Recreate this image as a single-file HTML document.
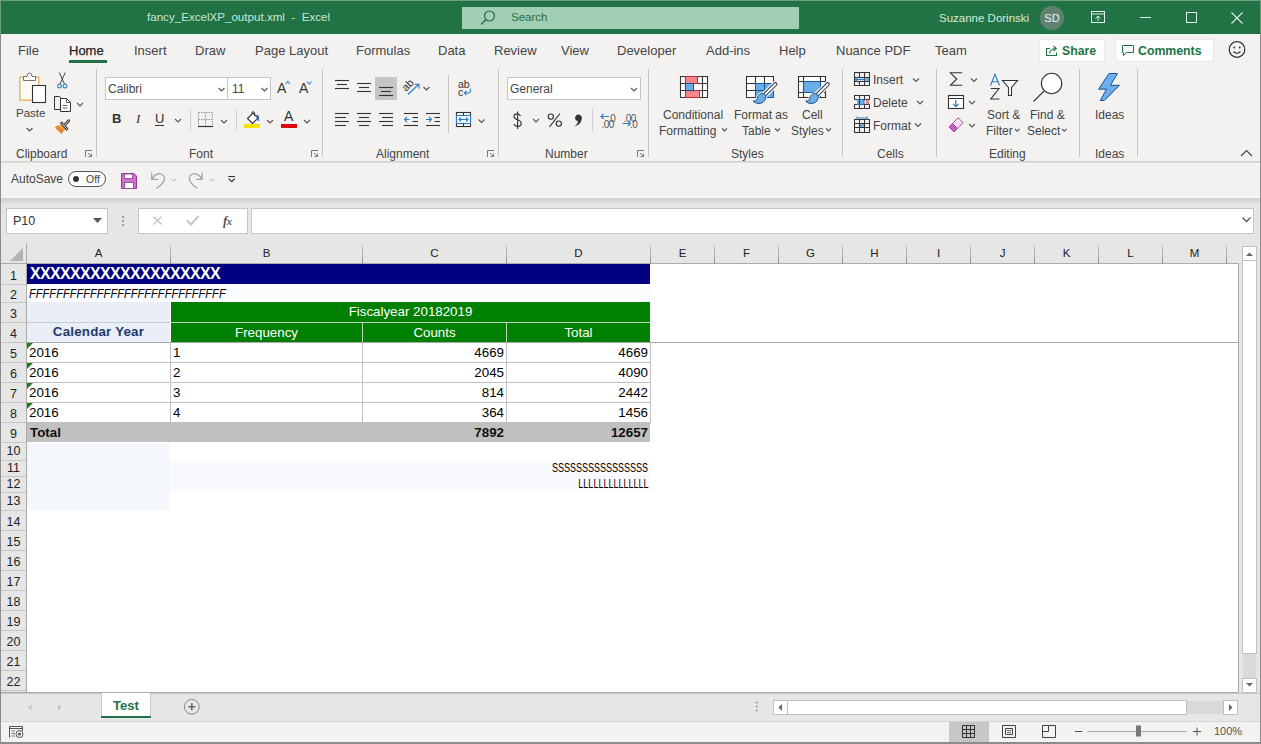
<!DOCTYPE html>
<html><head><meta charset="utf-8">
<style>
*{margin:0;padding:0;box-sizing:border-box}
html,body{width:1261px;height:744px;overflow:hidden;background:#f3f2f1;font-family:"Liberation Sans",sans-serif;color:#323130}
.a{position:absolute;white-space:nowrap}
svg{position:absolute;overflow:visible}
#title{left:0;top:0;width:1261px;height:34px;background:#217346;border-top:1px solid #6a9f80}
.t13{font-size:13px;color:#444}
.rl{font-size:12px;color:#444}
.sep{position:absolute;width:1px;background:#c8c8c8}
.chev{position:absolute}
.hdr{position:absolute;background:#e6e6e6}
.cell{position:absolute;font-size:13.33px;color:#000;line-height:20px;white-space:nowrap;overflow:hidden}
</style></head><body>
<!-- TITLE BAR -->
<div id="title" class="a"></div>
<div class="a" style="left:147px;top:10px;font-size:11.6px;color:#c9e7d5">fancy_ExcelXP_output.xml&nbsp; - &nbsp;Excel</div>
<div class="a" style="left:462px;top:7px;width:337px;height:22px;background:#a0cfb3"></div>
<svg style="left:480px;top:10px" width="16" height="16" viewBox="0 0 16 16"><circle cx="9.5" cy="6" r="5" fill="none" stroke="#2d6b48" stroke-width="1.2"/><line x1="6" y1="9.5" x2="1" y2="14.5" stroke="#2d6b48" stroke-width="1.3"/></svg>
<div class="a" style="left:511px;top:11px;font-size:11.5px;color:#2d6b48">Search</div>
<div class="a" style="left:939px;top:12px;font-size:11.5px;color:#d6ebdd">Suzanne Dorinski</div>
<div class="a" style="left:1040px;top:6px;width:24px;height:24px;border-radius:12px;background:#5f8270"></div>
<div class="a" style="left:1043px;top:12px;width:18px;text-align:center;font-size:11px;color:#f4f4f4">SD</div>
<svg style="left:1091px;top:11px" width="15" height="13" viewBox="0 0 15 13"><rect x="0.5" y="0.5" width="13" height="11" fill="none" stroke="#e0efe6" stroke-width="1"/><line x1="0.5" y1="3" x2="13.5" y2="3" stroke="#e0efe6"/><path d="M7 10V5M4.5 7.5L7 5l2.5 2.5" fill="none" stroke="#e0efe6"/></svg>
<div class="a" style="left:1140px;top:17px;width:11px;height:1px;background:#e0efe6"></div>
<div class="a" style="left:1186px;top:12px;width:11px;height:11px;border:1px solid #e0efe6"></div>
<svg style="left:1231px;top:12px" width="12" height="12" viewBox="0 0 12 12"><path d="M0.5 0.5L11.5 11.5M11.5 0.5L0.5 11.5" stroke="#e0efe6" stroke-width="1.1"/></svg>

<!-- TABS -->
<div class="a t13" style="left:18px;top:43px">File</div>
<div class="a t13" style="left:69px;top:43px;color:#252423;font-weight:normal;-webkit-text-stroke:0.25px #252423">Home</div>
<div class="a" style="left:69px;top:60px;width:38px;height:3px;background:#217346"></div>
<div class="a t13" style="left:134px;top:43px">Insert</div>
<div class="a t13" style="left:195px;top:43px">Draw</div>
<div class="a t13" style="left:255px;top:43px">Page Layout</div>
<div class="a t13" style="left:356px;top:43px">Formulas</div>
<div class="a t13" style="left:438px;top:43px">Data</div>
<div class="a t13" style="left:494px;top:43px">Review</div>
<div class="a t13" style="left:561px;top:43px">View</div>
<div class="a t13" style="left:617px;top:43px">Developer</div>
<div class="a t13" style="left:706px;top:43px">Add-ins</div>
<div class="a t13" style="left:779px;top:43px">Help</div>
<div class="a t13" style="left:836px;top:43px">Nuance PDF</div>
<div class="a t13" style="left:935px;top:43px">Team</div>

<!-- share/comments -->
<div class="a" style="left:1039px;top:39px;width:66px;height:23px;background:#fdfdfd;border:1px solid #e9e8e7;border-radius:2px"></div>
<div class="a" style="left:1062px;top:44px;font-size:12.3px;font-weight:bold;color:#217346">Share</div>
<div class="a" style="left:1115px;top:39px;width:99px;height:23px;background:#fdfdfd;border:1px solid #e9e8e7;border-radius:2px"></div>
<div class="a" style="left:1138px;top:44px;font-size:12.3px;font-weight:bold;color:#217346">Comments</div>


<!-- RIBBON -->
<div class="a" style="left:0;top:161px;width:1261px;height:1px;background:#d2d0ce"></div>
<div class="a" style="left:0;top:162px;width:1261px;height:1px;background:#e1dfdd"></div>
<!-- labels -->
<div class="a rl" style="left:16px;top:147px">Clipboard</div>
<div class="a rl" style="left:189px;top:147px">Font</div>
<div class="a rl" style="left:376px;top:147px">Alignment</div>
<div class="a rl" style="left:545px;top:147px">Number</div>
<div class="a rl" style="left:731px;top:147px">Styles</div>
<div class="a rl" style="left:877px;top:147px">Cells</div>
<div class="a rl" style="left:989px;top:147px">Editing</div>
<div class="a rl" style="left:1095px;top:147px">Ideas</div>
<div class="a rl" style="left:16px;top:107px;font-size:11.5px">Paste</div>
<!-- font boxes -->
<div class="a" style="left:105px;top:77px;width:123px;height:23px;background:#fff;border:1px solid #c8c6c4"></div>
<div class="a" style="left:227px;top:77px;width:44px;height:23px;background:#fff;border:1px solid #c8c6c4"></div>
<div class="a rl" style="left:108px;top:82px">Calibri</div>
<div class="a rl" style="left:232px;top:82px">11</div>
<div class="a" style="left:507px;top:77px;width:134px;height:23px;background:#fff;border:1px solid #c8c6c4"></div>
<div class="a rl" style="left:510px;top:82px">General</div>
<!-- bottom align selected bg -->
<div class="a" style="left:375px;top:77px;width:22px;height:23px;background:#c8c6c4"></div>
<!-- styles labels -->
<div class="a rl" style="left:663px;top:108px">Conditional</div>
<div class="a rl" style="left:659px;top:124px">Formatting</div>
<div class="a rl" style="left:734px;top:108px">Format as</div>
<div class="a rl" style="left:742px;top:124px">Table</div>
<div class="a rl" style="left:802px;top:108px">Cell</div>
<div class="a rl" style="left:791px;top:124px">Styles</div>
<div class="a rl" style="left:873px;top:73px">Insert</div>
<div class="a rl" style="left:873px;top:96px">Delete</div>
<div class="a rl" style="left:873px;top:119px">Format</div>
<div class="a rl" style="left:987px;top:108px">Sort &amp;</div>
<div class="a rl" style="left:986px;top:124px">Filter</div>
<div class="a rl" style="left:1030px;top:108px">Find &amp;</div>
<div class="a rl" style="left:1027px;top:124px">Select</div>
<div class="a rl" style="left:1095px;top:108px">Ideas</div>
<!-- text-ish icons -->
<div class="a" style="left:112px;top:111px;font-size:13px;font-weight:bold;color:#333">B</div>
<div class="a" style="left:136px;top:111px;font-size:13px;font-style:italic;font-family:'Liberation Serif';color:#333">I</div>
<div class="a" style="left:155px;top:111px;font-size:13px;color:#333">U</div>
<div class="a" style="left:277px;top:80px;font-size:14px;color:#333">A</div>
<div class="a" style="left:299px;top:80px;font-size:14px;color:#333">A</div>
<div class="a" style="left:284px;top:108px;font-size:14px;color:#333">A</div>

<svg style="left:0;top:0" width="1261" height="744" viewBox="0 0 1261 744">
<line x1="96.5" y1="69" x2="96.5" y2="157" stroke="#c8c6c4"/>
<line x1="322.5" y1="69" x2="322.5" y2="157" stroke="#c8c6c4"/>
<line x1="498.5" y1="69" x2="498.5" y2="157" stroke="#c8c6c4"/>
<line x1="648.5" y1="69" x2="648.5" y2="157" stroke="#c8c6c4"/>
<line x1="842.5" y1="69" x2="842.5" y2="157" stroke="#c8c6c4"/>
<line x1="936.5" y1="69" x2="936.5" y2="157" stroke="#c8c6c4"/>
<line x1="1079.5" y1="69" x2="1079.5" y2="157" stroke="#c8c6c4"/>
<line x1="1137.5" y1="69" x2="1137.5" y2="157" stroke="#c8c6c4"/>
<line x1="448.5" y1="75" x2="448.5" y2="133" stroke="#c8c6c4"/>
<line x1="190.5" y1="109" x2="190.5" y2="131" stroke="#d2d0ce"/>
<line x1="236.5" y1="109" x2="236.5" y2="131" stroke="#d2d0ce"/>
<line x1="592.5" y1="109" x2="592.5" y2="131" stroke="#d2d0ce"/>
<path d="M85.5 157V150.5H92" fill="none" stroke="#777"/><path d="M88 153L91.5 156.5M91.5 153.5V156.5H88.5" fill="none" stroke="#777"/>
<path d="M311.5 157V150.5H318" fill="none" stroke="#777"/><path d="M314 153L317.5 156.5M317.5 153.5V156.5H314.5" fill="none" stroke="#777"/>
<path d="M487.5 157V150.5H494" fill="none" stroke="#777"/><path d="M490 153L493.5 156.5M493.5 153.5V156.5H490.5" fill="none" stroke="#777"/>
<path d="M637.5 157V150.5H644" fill="none" stroke="#777"/><path d="M640 153L643.5 156.5M643.5 153.5V156.5H640.5" fill="none" stroke="#777"/>
<path d="M1241 156L1246.5 150.5L1252 156" fill="none" stroke="#444" stroke-width="1.2"/>
<rect x="19.8" y="77.2" width="19" height="23" fill="#fefaf4" stroke="#eab868" stroke-width="1.5"/>
<path d="M23.5 80.5V76.5H27Q27.2 73 29.5 73Q31.8 73 32 76.5H35.5V80.5Z" fill="#fff" stroke="#727272"/>
<rect x="32.5" y="85.5" width="13" height="17" fill="#fff" stroke="#333" stroke-width="1.1"/>
<path d="M26.5 128L29.5 131L32.5 128" fill="none" stroke="#555" stroke-width="1.1"/>
<path d="M59.3 72.5L64.5 84M65.3 72.5L60 84" stroke="#444" stroke-width="1" fill="none"/>
<circle cx="59.5" cy="86" r="1.9" fill="none" stroke="#3a8ad0" stroke-width="1.2"/><circle cx="65" cy="86" r="1.9" fill="none" stroke="#3a8ad0" stroke-width="1.2"/>
<path d="M60.5 109.5H54.5V96.5H59.5L61 98" fill="none" stroke="#333"/>
<path d="M60.5 98.5H66.5L70.5 102.5V111.5H60.5Z" fill="#fff" stroke="#333"/>
<path d="M66.5 98.5V102.5H70.5" fill="none" stroke="#333" stroke-width="0.8"/>
<path d="M62.8 105.5H67.5M62.8 108H67.5" stroke="#555" stroke-width="0.9"/>
<path d="M77 103L80.0 106L83 103" fill="none" stroke="#555" stroke-width="1.1"/>
<path d="M61.2 124.3L65.8 128.9L61.3 133.8L54.8 127.2Z" fill="#f0a04a"/>
<path d="M58 125.5L63.5 131L61.3 133.8L55 127.5Z" fill="#e8862a"/>
<path d="M64.6 124.9L68.7 120.7M61.6 123.1L66.9 129" stroke="#333" stroke-width="2.8" stroke-linecap="round"/>
<path d="M64.6 124.9L68.7 120.7M61.6 123.1L66.9 129" stroke="#fff" stroke-width="0.9" stroke-linecap="round"/>
<path d="M218.5 88L221.5 91L224.5 88" fill="none" stroke="#555" stroke-width="1.1"/>
<path d="M261.5 88L264.5 91L267.5 88" fill="none" stroke="#555" stroke-width="1.1"/>
<path d="M175 119L178.0 122L181 119" fill="none" stroke="#555" stroke-width="1.1"/>
<path d="M221 120L224.0 123L227 120" fill="none" stroke="#555" stroke-width="1.1"/>
<path d="M267 120L270.0 123L273 120" fill="none" stroke="#555" stroke-width="1.1"/>
<path d="M304 120L307.0 123L310 120" fill="none" stroke="#555" stroke-width="1.1"/>
<path d="M285.5 84L287.8 81.3L290 84" fill="none" stroke="#3b8ad0" stroke-width="1.1"/>
<path d="M307 81.5L309.3 84.2L311.5 81.5" fill="none" stroke="#3b8ad0" stroke-width="1.1"/>
<line x1="155" y1="125.5" x2="164" y2="125.5" stroke="#333"/>
<path d="M198.5 112.5H212.5V126M198.5 112.5V126M205.5 112.5V126M198.5 119.5H212.5" fill="none" stroke="#999" stroke-dasharray="1.5 1"/>
<line x1="198" y1="126.5" x2="213" y2="126.5" stroke="#333" stroke-width="1.2"/>
<path d="M247.5 118.5L253 113L258 118L252.5 123.5Z" fill="#fff" stroke="#333" stroke-width="1.1"/>
<path d="M252 113.5V112.2Q253.5 111 254.5 112.5V116" fill="none" stroke="#333"/>
<path d="M256 116Q258.5 114.5 258.5 119V121" fill="none" stroke="#2a5ea8" stroke-width="1.3"/>
<rect x="244" y="124" width="16" height="4" fill="#f5e400"/>
<rect x="281" y="124" width="16" height="4" fill="#e00010"/>
<line x1="335" y1="80.5" x2="349" y2="80.5" stroke="#333" stroke-width="1.1"/><line x1="337" y1="84.5" x2="347" y2="84.5" stroke="#333" stroke-width="1.1"/><line x1="335" y1="88.5" x2="349" y2="88.5" stroke="#333" stroke-width="1.1"/>
<line x1="357" y1="83.5" x2="371" y2="83.5" stroke="#333" stroke-width="1.1"/><line x1="359" y1="87.5" x2="369" y2="87.5" stroke="#333" stroke-width="1.1"/><line x1="357" y1="91.5" x2="371" y2="91.5" stroke="#333" stroke-width="1.1"/>
<line x1="379" y1="87.5" x2="393" y2="87.5" stroke="#333" stroke-width="1.1"/><line x1="381" y1="91.5" x2="391" y2="91.5" stroke="#333" stroke-width="1.1"/><line x1="379" y1="95.5" x2="393" y2="95.5" stroke="#333" stroke-width="1.1"/>
<line x1="335" y1="113.5" x2="349" y2="113.5" stroke="#333" stroke-width="1.1"/><line x1="335" y1="117.5" x2="346" y2="117.5" stroke="#333" stroke-width="1.1"/><line x1="335" y1="121.5" x2="349" y2="121.5" stroke="#333" stroke-width="1.1"/><line x1="335" y1="125.5" x2="346" y2="125.5" stroke="#333" stroke-width="1.1"/>
<line x1="357" y1="113.5" x2="371" y2="113.5" stroke="#333" stroke-width="1.1"/><line x1="359" y1="117.5" x2="369" y2="117.5" stroke="#333" stroke-width="1.1"/><line x1="357" y1="121.5" x2="371" y2="121.5" stroke="#333" stroke-width="1.1"/><line x1="359" y1="125.5" x2="369" y2="125.5" stroke="#333" stroke-width="1.1"/>
<line x1="379" y1="113.5" x2="393" y2="113.5" stroke="#333" stroke-width="1.1"/><line x1="382" y1="117.5" x2="393" y2="117.5" stroke="#333" stroke-width="1.1"/><line x1="379" y1="121.5" x2="393" y2="121.5" stroke="#333" stroke-width="1.1"/><line x1="382" y1="125.5" x2="393" y2="125.5" stroke="#333" stroke-width="1.1"/>
<line x1="404" y1="113.5" x2="418" y2="113.5" stroke="#333" stroke-width="1.1"/><line x1="412.5" y1="117.5" x2="418" y2="117.5" stroke="#333" stroke-width="1.1"/><line x1="412.5" y1="121.5" x2="418" y2="121.5" stroke="#333" stroke-width="1.1"/><line x1="404" y1="125.5" x2="418" y2="125.5" stroke="#333" stroke-width="1.1"/>
<path d="M409.5 119.5H404.5M407 117L404.5 119.5L407 122" fill="none" stroke="#2b7cc4" stroke-width="1.1"/>
<line x1="426" y1="113.5" x2="440" y2="113.5" stroke="#333" stroke-width="1.1"/><line x1="434.5" y1="117.5" x2="440" y2="117.5" stroke="#333" stroke-width="1.1"/><line x1="434.5" y1="121.5" x2="440" y2="121.5" stroke="#333" stroke-width="1.1"/><line x1="426" y1="125.5" x2="440" y2="125.5" stroke="#333" stroke-width="1.1"/>
<path d="M426 119.5H431.5M429 117L431.5 119.5L429 122" fill="none" stroke="#2b7cc4" stroke-width="1.1"/>
<text x="0" y="0" transform="translate(406 92) rotate(-45)" font-family="Liberation Sans" font-size="11" fill="#333">ab</text>
<path d="M408 94.5L419 84M414.5 84.2H419V88.7" fill="none" stroke="#2b7cc4" stroke-width="1.1"/>
<path d="M423.5 87L426.5 90L429.5 87" fill="none" stroke="#555" stroke-width="1.1"/>
<text x="458" y="87.5" font-family="Liberation Sans" font-size="10.5" fill="#333">ab</text>
<text x="458" y="95.5" font-family="Liberation Sans" font-size="10.5" fill="#333">c</text>
<path d="M470 88.5Q472 92.5 468 93H464.5M466.5 90.8L464.3 93L466.5 95.2" fill="none" stroke="#2b7cc4" stroke-width="1.1"/>
<rect x="456.5" y="112.5" width="14" height="14" fill="#fff" stroke="#333" stroke-width="1.1"/>
<rect x="456.5" y="115.5" width="14" height="8" fill="#fff" stroke="#2b7cc4" stroke-width="1.1"/>
<path d="M463.5 112.5V116M463.5 123V126.5" stroke="#333"/>
<path d="M459 119.5H468M461 117.5L459 119.5L461 121.5M466 117.5L468 119.5L466 121.5" fill="none" stroke="#2b7cc4" stroke-width="1.1"/>
<path d="M478.5 119.5L481.5 122.5L484.5 119.5" fill="none" stroke="#555" stroke-width="1.1"/>
<path d="M631 88L634.0 91L637 88" fill="none" stroke="#555" stroke-width="1.1"/>
<path d="M533 119L536.0 122L539 119" fill="none" stroke="#555" stroke-width="1.1"/>
<path d="M578.5 114.5a3.4 3.4 0 1 1 -0.1 0Z" fill="#333"/>
<path d="M581.5 118.5Q582 124 574.5 126.5Q578.5 123 578 120Z" fill="#333"/>
<path d="M520.5 116Q519.5 113.8 517 113.8Q514 113.8 514 116.6Q514 118.8 517.5 119.8Q521.2 120.8 521.2 123.6Q521.2 126.4 517.8 126.4Q515 126.4 514 124M517.6 111.5V129" fill="none" stroke="#333" stroke-width="1.15"/>
<circle cx="550.8" cy="116.6" r="2.6" fill="none" stroke="#333" stroke-width="1.15"/><circle cx="558.8" cy="123.6" r="2.6" fill="none" stroke="#333" stroke-width="1.15"/><line x1="560" y1="113.5" x2="549.5" y2="126.8" stroke="#333" stroke-width="1.15"/>
<text x="608" y="121.5" font-family="Liberation Sans" font-size="10" fill="#555" letter-spacing="-0.5">.0</text>
<text x="601.5" y="128" font-family="Liberation Sans" font-size="10" fill="#555" letter-spacing="-0.5">.00</text>
<path d="M609 116.5H601M603.5 114L601 116.5L603.5 119" fill="none" stroke="#2b7cc4" stroke-width="1.1"/>
<text x="623.5" y="121.5" font-family="Liberation Sans" font-size="10" fill="#555" letter-spacing="-0.5">.00</text>
<text x="630" y="128" font-family="Liberation Sans" font-size="10" fill="#555" letter-spacing="-0.5">.0</text>
<path d="M622.5 123.5H630.5M628 121L630.5 123.5L628 126" fill="none" stroke="#2b7cc4" stroke-width="1.1"/>
<rect x="680.5" y="76.5" width="27" height="21" fill="#fff"/>
<path d="M680.5 76.5H707.5V97.5H680.5ZM680.5 83.5H707.5M680.5 90.5H707.5M685.5 76.5V97.5M702.5 76.5V97.5M697.5 76.5V83.5M699.5 90.5V97.5" fill="none" stroke="#333" stroke-width="1.1"/>
<rect x="685.5" y="76.5" width="12" height="7" fill="#f4868a" stroke="#c02a30" stroke-width="1"/>
<rect x="685.5" y="90.5" width="14" height="7" fill="#f4868a" stroke="#c02a30" stroke-width="1"/>
<rect x="685.5" y="83.5" width="8" height="7" fill="#6aaee8" stroke="#1e4e8c" stroke-width="1"/>
<rect x="746.5" y="76.5" width="27" height="21" fill="#fff"/>
<rect x="755.5" y="83.5" width="18" height="14" fill="#6aaee8"/>
<path d="M773.5 83.5V76.5H746.5V97.5H755.5M746.5 83.5H755.5M746.5 90.5H755.5M755.5 76.5V83.5M764.5 76.5V83.5" fill="none" stroke="#333" stroke-width="1.1"/>
<path d="M755.5 83.5H773.5V97.5H755.5ZM755.5 90.5H773.5M764.5 83.5V97.5" fill="none" stroke="#1e5a9c" stroke-width="1.05"/>
<path d="M775.5 84L765 94.5" stroke="#f3f2f1" stroke-width="6.5" stroke-linecap="round"/>
<path d="M765.8 96.2Q764 92 759.8 94.3Q757.2 96 757.3 98.8Q757 101.3 753.2 101.2Q756 104.2 760.2 103.4Q765.8 102 765.8 96.2Z" fill="#f3f2f1" stroke="#f3f2f1" stroke-width="2.5"/>
<path d="M775.3 84.2L764.6 94.9" stroke="#2e3a46" stroke-width="4" stroke-linecap="round"/>
<path d="M775.3 84.2L764.6 94.9" stroke="#fff" stroke-width="2" stroke-linecap="round"/>
<path d="M765.8 96.2Q764 92 759.8 94.3Q757.2 96 757.3 98.8Q757 101.3 753.2 101.2Q756 104.2 760.2 103.4Q765.8 102 765.8 96.2Z" fill="#6aaee8" stroke="#1e4e8c" stroke-width="1"/>
<rect x="798.5" y="76.5" width="27" height="21" fill="#fff"/>
<rect x="803.5" y="81.5" width="17" height="11" fill="#6aaee8"/>
<path d="M798.5 76.5H825.5V97.5H798.5ZM798.5 81.5H825.5M798.5 92.5H825.5M803.5 76.5V97.5M820.5 76.5V97.5" fill="none" stroke="#333" stroke-width="1.1"/>
<path d="M803.5 81.5H820.5V92.5H803.5Z" fill="none" stroke="#1e5a9c" stroke-width="1.05"/>
<path d="M828.0 84L817.5 94.5" stroke="#f3f2f1" stroke-width="6.5" stroke-linecap="round"/>
<path d="M818.3 96.2Q816.5 92 812.3 94.3Q809.7 96 809.8 98.8Q809.5 101.3 805.7 101.2Q808.5 104.2 812.7 103.4Q818.3 102 818.3 96.2Z" fill="#f3f2f1" stroke="#f3f2f1" stroke-width="2.5"/>
<path d="M827.8 84.2L817.1 94.9" stroke="#2e3a46" stroke-width="4" stroke-linecap="round"/>
<path d="M827.8 84.2L817.1 94.9" stroke="#fff" stroke-width="2" stroke-linecap="round"/>
<path d="M818.3 96.2Q816.5 92 812.3 94.3Q809.7 96 809.8 98.8Q809.5 101.3 805.7 101.2Q808.5 104.2 812.7 103.4Q818.3 102 818.3 96.2Z" fill="#6aaee8" stroke="#1e4e8c" stroke-width="1"/>
<path d="M722 128.5L724.5 131.0L727 128.5" fill="none" stroke="#555" stroke-width="1.1"/>
<path d="M775 128.5L777.5 131.0L780 128.5" fill="none" stroke="#555" stroke-width="1.1"/>
<path d="M826 128.5L828.5 131.0L831 128.5" fill="none" stroke="#555" stroke-width="1.1"/>
<rect x="865" y="77.5" width="4.5" height="4" fill="#6aaee8"/>
<path d="M854.5 72.5H869.5V85.5H854.5ZM854.5 77.5H869.5M854.5 81.5H869.5M859.5 72.5V77.5M864.5 72.5V85.5M859.5 81.5V85.5" fill="none" stroke="#333" stroke-width="1.05"/>
<rect x="855.2" y="78" width="9" height="3" fill="#fff"/>
<path d="M864 79.5H855.3M858 76.8L855.3 79.5L858 82.2" fill="none" stroke="#2b7cc4" stroke-width="1.3"/>
<rect x="857" y="99.5" width="7" height="5" fill="#6aaee8"/>
<path d="M854.5 99.5V95.5H869.5V99.5M854.5 104.5V108.5H869.5V104.5M854.5 99.5H869.5M854.5 104.5H869.5M859.5 95.5V108.5M864.5 95.5V99.5M864.5 104.5V108.5" fill="none" stroke="#333" stroke-width="1.05"/>
<path d="M856.5 99.5H864V104.5H856.5" fill="none" stroke="#2b6cb0" stroke-width="1"/>
<path d="M865.5 99.5L869.5 104.5M869.5 99.5L865.5 104.5" stroke="#e05050" stroke-width="1.1"/>
<rect x="859.5" y="123.5" width="5" height="4" fill="#6aaee8"/>
<path d="M854.5 119.5H869.5V132.5H854.5ZM854.5 123.5H869.5M854.5 127.5H869.5M859.5 119.5V132.5M864.5 119.5V132.5" fill="none" stroke="#333" stroke-width="1.05"/>
<path d="M857 118H867M857 116.5V119.5M867 116.5V119.5" stroke="#2b7cc4" stroke-width="1"/>
<path d="M913 78.5L916.0 81.5L919 78.5" fill="none" stroke="#555" stroke-width="1.1"/>
<path d="M917 101L920.0 104L923 101" fill="none" stroke="#555" stroke-width="1.1"/>
<path d="M915 123.5L918.0 126.5L921 123.5" fill="none" stroke="#555" stroke-width="1.1"/>
<path d="M962.2 72.8H950.5L956.8 79L950.5 85.3H962.2" fill="none" stroke="#333" stroke-width="1.1"/>
<path d="M971 78.5L974.0 81.5L977 78.5" fill="none" stroke="#555" stroke-width="1.1"/>
<rect x="948.5" y="95.5" width="15" height="13" fill="#fff" stroke="#333" stroke-width="1.1"/><line x1="948.5" y1="98.5" x2="963.5" y2="98.5" stroke="#333"/>
<path d="M955.8 100V106.5M953 103.8L955.8 106.6L958.6 103.8" fill="none" stroke="#2b7cc4" stroke-width="1.2"/>
<path d="M969 101L972.0 104L975 101" fill="none" stroke="#555" stroke-width="1.1"/>
<path d="M949 127L958.2 117.8L963.1 122.7L953.9 131.9Z" fill="#f6e2f6" stroke="#a848a8" stroke-width="1"/>
<path d="M949 127L952.5 123.5L957.4 128.4L953.9 131.9Z" fill="#c45cc4" stroke="#a848a8" stroke-width="1"/>
<path d="M969 124L972.0 127L975 124" fill="none" stroke="#555" stroke-width="1.1"/>
<path d="M990.5 85.5L995 74.3L999.5 85.5M992 81.8H998" fill="none" stroke="#2b7cc4" stroke-width="1.1"/>
<path d="M990.8 88.5H999L990.8 99H999.5" fill="none" stroke="#333" stroke-width="1.1"/>
<path d="M1002.5 80.5H1017.5L1011.5 87.5V95.5H1008.5V87.5Z" fill="#fff" stroke="#333" stroke-width="1.1"/>
<circle cx="1051.6" cy="83.5" r="10.2" fill="#fff" stroke="#333" stroke-width="1.1"/><line x1="1033.5" y1="101.5" x2="1044" y2="91" stroke="#333" stroke-width="1.1"/>
<path d="M1015 129L1017.25 131.3L1019.5 129" fill="none" stroke="#555" stroke-width="1.1"/>
<path d="M1062 129L1064.25 131.3L1066.5 129" fill="none" stroke="#555" stroke-width="1.1"/>
<path d="M1109 73.5H1117.5L1110.5 85.3H1119.5L1104.3 100.5H1100.3L1106.5 89.2H1098.6Z" fill="#6ab0f0" stroke="#1e4e8c" stroke-width="1"/>
<path d="M1050 48.5H1046.5V55.5H1056.5V52.5" fill="none" stroke="#217346" stroke-width="1.1"/>
<path d="M1049.5 53.5Q1050 49 1055.5 48.5M1053.5 46L1056.3 48.5L1053.5 51" fill="none" stroke="#217346" stroke-width="1.1"/>
<path d="M1122.5 45.5H1133.5V52.5H1126.5L1123.5 55.5V52.5H1122.5Z" fill="none" stroke="#217346" stroke-width="1"/>
<circle cx="1237" cy="49.5" r="7.8" fill="none" stroke="#333" stroke-width="1.2"/><circle cx="1234.3" cy="47.5" r="0.9" fill="#333"/><circle cx="1239.7" cy="47.5" r="0.9" fill="#333"/><path d="M1233.5 51.5Q1237 55 1240.5 51.5" fill="none" stroke="#333" stroke-width="1.1"/>
</svg>
<!-- QAT -->
<div class="a" style="left:11px;top:172px;font-size:12px;color:#444">AutoSave</div>
<div class="a" style="left:68px;top:171px;width:38px;height:16px;border:1px solid #555;border-radius:8px;background:#fdfcfb"></div>
<div class="a" style="left:73px;top:176px;width:6px;height:6px;border-radius:3px;background:#333"></div>
<div class="a" style="left:86px;top:173px;font-size:10.5px;color:#444">Off</div>
<svg style="left:0;top:0" width="1261" height="744" viewBox="0 0 1261 744">
<path d="M121.5 173.5H134L136.5 176V188.5H121.5Z" fill="#cf6fcf" stroke="#8e3e8e" stroke-width="1"/>
<rect x="124.5" y="174" width="8" height="4.5" fill="#fff" stroke="#8e3e8e" stroke-width="0.8"/>
<rect x="124.5" y="182.5" width="9" height="6" fill="#fff" stroke="#8e3e8e" stroke-width="0.8"/>
<path d="M151.7 172.5V179.3H158" fill="none" stroke="#a0a0a0" stroke-width="1.2"/>
<path d="M152.2 178.8C155 173.5 161 172 163.8 176C166 180 162 185 156.5 188.5" fill="none" stroke="#a0a0a0" stroke-width="1.2"/>
<path d="M171.5 178.8L173.7 181L176 178.8" fill="none" stroke="#aaa"/>
<path d="M202.1 172.5V179.3H196" fill="none" stroke="#a0a0a0" stroke-width="1.2"/>
<path d="M201.6 178.8C198.8 173.5 192.8 172 190 176C187.8 180 191.8 185 197.3 188.5" fill="none" stroke="#a0a0a0" stroke-width="1.2"/>
<path d="M209.5 178.8L211.7 181L214 178.8" fill="none" stroke="#aaa"/>
<line x1="228.3" y1="176.5" x2="235" y2="176.5" stroke="#333" stroke-width="1.1"/>
<path d="M228.6 178.6L231.7 181.6L234.8 178.6" fill="none" stroke="#333" stroke-width="1.2"/>
</svg>

<div class="a" style="left:0;top:196px;width:1261px;height:2px;background:#f8f6f4"></div>
<div class="a" style="left:0;top:198px;width:1261px;height:496px;background:#e6e6e6"></div>
<div class="a" style="left:0;top:198px;width:1261px;height:7px;background:linear-gradient(#d0d0d0,#e6e6e6)"></div>
<div class="a" style="left:6px;top:208px;width:102px;height:26px;background:#fff;border:1px solid #c6c6c6"></div>
<div class="a" style="left:13px;top:214px;font-size:12.5px;color:#333">P10</div>
<svg style="left:93px;top:218px" width="9" height="5" viewBox="0 0 9 5"><path d="M0 0H9L4.5 5Z" fill="#555"/></svg>
<div class="a" style="left:122px;top:216px;width:2px;height:2px;background:#999"></div><div class="a" style="left:122px;top:220px;width:2px;height:2px;background:#999"></div><div class="a" style="left:122px;top:224px;width:2px;height:2px;background:#999"></div>
<div class="a" style="left:138px;top:208px;width:110px;height:26px;background:#fff;border:1px solid #c6c6c6"></div>
<svg style="left:152px;top:215px" width="11" height="11" viewBox="0 0 11 11"><path d="M1.5 1.5L9.5 9.5M9.5 1.5L1.5 9.5" stroke="#c4c4c4" stroke-width="1.4"/></svg>
<svg style="left:186px;top:215px" width="14" height="11" viewBox="0 0 14 11"><path d="M1 5.5L5 9.5L12.5 1" fill="none" stroke="#c4c4c4" stroke-width="2"/></svg>
<div class="a" style="left:223px;top:213px;font-family:Liberation Serif;font-style:italic;font-weight:bold;font-size:13px;color:#555;letter-spacing:-0.5px">f<span style="font-size:10.5px">x</span></div>
<div class="a" style="left:251px;top:208px;width:1003px;height:26px;background:#fff;border:1px solid #c6c6c6"></div>
<svg style="left:1242px;top:217px" width="9" height="6" viewBox="0 0 9 6"><path d="M0.5 0.5L4.5 4.5L8.5 0.5" fill="none" stroke="#555" stroke-width="1.3"/></svg>
<div class="a" style="left:0;top:243px;width:1239px;height:21px;background:#e6e6e6"></div>
<div class="a" style="left:27px;top:264px;width:1212px;height:429px;background:#fff"></div>
<div class="a" style="left:0;top:263px;width:1239px;height:1px;background:#ababab"></div>
<div class="a" style="left:26px;top:243px;width:1px;height:450px;background:#ababab"></div>
<svg style="left:10px;top:248px" width="13" height="13" viewBox="0 0 13 13"><path d="M13 0V13H0Z" fill="#b4b4b4"/></svg>
<div class="a" style="left:170px;top:242px;width:1px;height:21px;background:linear-gradient(#e6e6e6,#c0c0c0 30%,#8c8c8c)"></div>
<div class="a" style="left:27px;top:247px;width:143px;text-align:center;font-size:11.5px;color:#222">A</div>
<div class="a" style="left:362px;top:242px;width:1px;height:21px;background:linear-gradient(#e6e6e6,#c0c0c0 30%,#8c8c8c)"></div>
<div class="a" style="left:171px;top:247px;width:191px;text-align:center;font-size:11.5px;color:#222">B</div>
<div class="a" style="left:506px;top:242px;width:1px;height:21px;background:linear-gradient(#e6e6e6,#c0c0c0 30%,#8c8c8c)"></div>
<div class="a" style="left:363px;top:247px;width:143px;text-align:center;font-size:11.5px;color:#222">C</div>
<div class="a" style="left:650px;top:242px;width:1px;height:21px;background:linear-gradient(#e6e6e6,#c0c0c0 30%,#8c8c8c)"></div>
<div class="a" style="left:507px;top:247px;width:143px;text-align:center;font-size:11.5px;color:#222">D</div>
<div class="a" style="left:714px;top:242px;width:1px;height:21px;background:linear-gradient(#e6e6e6,#c0c0c0 30%,#8c8c8c)"></div>
<div class="a" style="left:651px;top:247px;width:63px;text-align:center;font-size:11.5px;color:#222">E</div>
<div class="a" style="left:778px;top:242px;width:1px;height:21px;background:linear-gradient(#e6e6e6,#c0c0c0 30%,#8c8c8c)"></div>
<div class="a" style="left:715px;top:247px;width:63px;text-align:center;font-size:11.5px;color:#222">F</div>
<div class="a" style="left:842px;top:242px;width:1px;height:21px;background:linear-gradient(#e6e6e6,#c0c0c0 30%,#8c8c8c)"></div>
<div class="a" style="left:779px;top:247px;width:63px;text-align:center;font-size:11.5px;color:#222">G</div>
<div class="a" style="left:906px;top:242px;width:1px;height:21px;background:linear-gradient(#e6e6e6,#c0c0c0 30%,#8c8c8c)"></div>
<div class="a" style="left:843px;top:247px;width:63px;text-align:center;font-size:11.5px;color:#222">H</div>
<div class="a" style="left:970px;top:242px;width:1px;height:21px;background:linear-gradient(#e6e6e6,#c0c0c0 30%,#8c8c8c)"></div>
<div class="a" style="left:907px;top:247px;width:63px;text-align:center;font-size:11.5px;color:#222">I</div>
<div class="a" style="left:1034px;top:242px;width:1px;height:21px;background:linear-gradient(#e6e6e6,#c0c0c0 30%,#8c8c8c)"></div>
<div class="a" style="left:971px;top:247px;width:63px;text-align:center;font-size:11.5px;color:#222">J</div>
<div class="a" style="left:1098px;top:242px;width:1px;height:21px;background:linear-gradient(#e6e6e6,#c0c0c0 30%,#8c8c8c)"></div>
<div class="a" style="left:1035px;top:247px;width:63px;text-align:center;font-size:11.5px;color:#222">K</div>
<div class="a" style="left:1162px;top:242px;width:1px;height:21px;background:linear-gradient(#e6e6e6,#c0c0c0 30%,#8c8c8c)"></div>
<div class="a" style="left:1099px;top:247px;width:63px;text-align:center;font-size:11.5px;color:#222">L</div>
<div class="a" style="left:1226px;top:242px;width:1px;height:21px;background:linear-gradient(#e6e6e6,#c0c0c0 30%,#8c8c8c)"></div>
<div class="a" style="left:1163px;top:247px;width:63px;text-align:center;font-size:11.5px;color:#222">M</div>
<div class="a" style="left:1238px;top:264px;width:1px;height:430px;background:#ababab"></div>
<div class="a" style="left:0;top:284px;width:26px;height:1px;background:#c6c6c6"></div>
<div class="a" style="left:0;top:264px;width:26px;height:20px;line-height:20px;text-align:center;font-size:12.5px;color:#222;padding-top:2px;padding-left:1px">1</div>
<div class="a" style="left:0;top:302px;width:26px;height:1px;background:#c6c6c6"></div>
<div class="a" style="left:0;top:285px;width:26px;height:17px;line-height:17px;text-align:center;font-size:12.5px;color:#222;padding-top:2px;padding-left:1px">2</div>
<div class="a" style="left:0;top:322px;width:26px;height:1px;background:#c6c6c6"></div>
<div class="a" style="left:0;top:303px;width:26px;height:19px;line-height:19px;text-align:center;font-size:12.5px;color:#222;padding-top:2px;padding-left:1px">3</div>
<div class="a" style="left:0;top:342px;width:26px;height:1px;background:#c6c6c6"></div>
<div class="a" style="left:0;top:323px;width:26px;height:19px;line-height:19px;text-align:center;font-size:12.5px;color:#222;padding-top:2px;padding-left:1px">4</div>
<div class="a" style="left:0;top:362px;width:26px;height:1px;background:#c6c6c6"></div>
<div class="a" style="left:0;top:343px;width:26px;height:19px;line-height:19px;text-align:center;font-size:12.5px;color:#222;padding-top:2px;padding-left:1px">5</div>
<div class="a" style="left:0;top:382px;width:26px;height:1px;background:#c6c6c6"></div>
<div class="a" style="left:0;top:363px;width:26px;height:19px;line-height:19px;text-align:center;font-size:12.5px;color:#222;padding-top:2px;padding-left:1px">6</div>
<div class="a" style="left:0;top:402px;width:26px;height:1px;background:#c6c6c6"></div>
<div class="a" style="left:0;top:383px;width:26px;height:19px;line-height:19px;text-align:center;font-size:12.5px;color:#222;padding-top:2px;padding-left:1px">7</div>
<div class="a" style="left:0;top:422px;width:26px;height:1px;background:#c6c6c6"></div>
<div class="a" style="left:0;top:403px;width:26px;height:19px;line-height:19px;text-align:center;font-size:12.5px;color:#222;padding-top:2px;padding-left:1px">8</div>
<div class="a" style="left:0;top:442px;width:26px;height:1px;background:#c6c6c6"></div>
<div class="a" style="left:0;top:423px;width:26px;height:19px;line-height:19px;text-align:center;font-size:12.5px;color:#222;padding-top:2px;padding-left:1px">9</div>
<div class="a" style="left:0;top:460px;width:26px;height:1px;background:#c6c6c6"></div>
<div class="a" style="left:0;top:443px;width:26px;height:17px;line-height:17px;text-align:center;font-size:12.5px;color:#222;padding-top:0px;padding-left:1px">10</div>
<div class="a" style="left:0;top:476px;width:26px;height:1px;background:#c6c6c6"></div>
<div class="a" style="left:0;top:461px;width:26px;height:15px;line-height:15px;text-align:center;font-size:12.5px;color:#222;padding-top:0px;padding-left:1px">11</div>
<div class="a" style="left:0;top:492px;width:26px;height:1px;background:#c6c6c6"></div>
<div class="a" style="left:0;top:477px;width:26px;height:15px;line-height:15px;text-align:center;font-size:12.5px;color:#222;padding-top:0px;padding-left:1px">12</div>
<div class="a" style="left:0;top:510px;width:26px;height:1px;background:#c6c6c6"></div>
<div class="a" style="left:0;top:493px;width:26px;height:17px;line-height:17px;text-align:center;font-size:12.5px;color:#222;padding-top:0px;padding-left:1px">13</div>
<div class="a" style="left:0;top:530px;width:26px;height:1px;background:#c6c6c6"></div>
<div class="a" style="left:0;top:511px;width:26px;height:19px;line-height:19px;text-align:center;font-size:12.5px;color:#222;padding-top:2px;padding-left:1px">14</div>
<div class="a" style="left:0;top:550px;width:26px;height:1px;background:#c6c6c6"></div>
<div class="a" style="left:0;top:531px;width:26px;height:19px;line-height:19px;text-align:center;font-size:12.5px;color:#222;padding-top:2px;padding-left:1px">15</div>
<div class="a" style="left:0;top:570px;width:26px;height:1px;background:#c6c6c6"></div>
<div class="a" style="left:0;top:551px;width:26px;height:19px;line-height:19px;text-align:center;font-size:12.5px;color:#222;padding-top:2px;padding-left:1px">16</div>
<div class="a" style="left:0;top:590px;width:26px;height:1px;background:#c6c6c6"></div>
<div class="a" style="left:0;top:571px;width:26px;height:19px;line-height:19px;text-align:center;font-size:12.5px;color:#222;padding-top:2px;padding-left:1px">17</div>
<div class="a" style="left:0;top:610px;width:26px;height:1px;background:#c6c6c6"></div>
<div class="a" style="left:0;top:591px;width:26px;height:19px;line-height:19px;text-align:center;font-size:12.5px;color:#222;padding-top:2px;padding-left:1px">18</div>
<div class="a" style="left:0;top:630px;width:26px;height:1px;background:#c6c6c6"></div>
<div class="a" style="left:0;top:611px;width:26px;height:19px;line-height:19px;text-align:center;font-size:12.5px;color:#222;padding-top:2px;padding-left:1px">19</div>
<div class="a" style="left:0;top:650px;width:26px;height:1px;background:#c6c6c6"></div>
<div class="a" style="left:0;top:631px;width:26px;height:19px;line-height:19px;text-align:center;font-size:12.5px;color:#222;padding-top:2px;padding-left:1px">20</div>
<div class="a" style="left:0;top:670px;width:26px;height:1px;background:#c6c6c6"></div>
<div class="a" style="left:0;top:651px;width:26px;height:19px;line-height:19px;text-align:center;font-size:12.5px;color:#222;padding-top:2px;padding-left:1px">21</div>
<div class="a" style="left:0;top:690px;width:26px;height:1px;background:#c6c6c6"></div>
<div class="a" style="left:0;top:671px;width:26px;height:19px;line-height:19px;text-align:center;font-size:12.5px;color:#222;padding-top:2px;padding-left:1px">22</div>
<div class="a" style="left:0;top:692px;width:1239px;height:1px;background:#ababab"></div>
<div class="a" style="left:27px;top:443px;width:143px;height:67px;background:#f4f7fc"></div>
<div class="a" style="left:171px;top:461px;width:479px;height:31px;background:#f9fafd"></div>
<div class="a" style="left:27px;top:264px;width:623px;height:20px;background:#000080"></div>
<div class="a" style="left:30px;top:264px;line-height:20px;font-size:16px;font-weight:bold;color:#fff;letter-spacing:-0.67px">XXXXXXXXXXXXXXXXXXX</div>
<div class="a" style="left:27px;top:284px;width:623px;height:18px;background:#fbfcfe"></div>
<div class="a" style="left:29px;top:284px;line-height:19px;font-size:13.3px;font-style:italic;color:#000;transform:scaleX(0.835);transform-origin:left">FFFFFFFFFFFFFFFFFFFFFFFFFFFFF</div>
<div class="a" style="left:27px;top:302px;width:143px;height:40px;background:#e9eef7"></div>
<div class="a" style="left:27px;top:322px;width:143px;height:20px;line-height:20px;text-align:center;font-size:13.33px;font-weight:bold;color:#1f3b6e;letter-spacing:0.2px">Calendar Year</div>
<div class="a" style="left:27px;top:322px;width:143px;height:1px;background:#c8ccd4"></div>
<div class="a" style="left:171px;top:302px;width:479px;height:40px;background:#008000"></div>
<div class="a" style="left:171px;top:322px;width:479px;height:1px;background:#b8d8b8"></div>
<div class="a" style="left:362px;top:323px;width:1px;height:19px;background:#b8d8b8"></div>
<div class="a" style="left:506px;top:323px;width:1px;height:19px;background:#b8d8b8"></div>
<div class="a" style="left:171px;top:302px;width:479px;line-height:20px;text-align:center;font-size:13.33px;color:#fff">Fiscalyear 20182019</div>
<div class="a" style="left:171px;top:323px;width:191px;line-height:19px;text-align:center;font-size:13.33px;color:#fff">Frequency</div>
<div class="a" style="left:363px;top:323px;width:143px;line-height:19px;text-align:center;font-size:13.33px;color:#fff">Counts</div>
<div class="a" style="left:507px;top:323px;width:143px;line-height:19px;text-align:center;font-size:13.33px;color:#fff">Total</div>
<div class="a" style="left:27px;top:342px;width:1211px;height:1px;background:#a8a8a8"></div>
<div class="a" style="left:27px;top:362px;width:624px;height:1px;background:#c0c0c0"></div>
<div class="a" style="left:29px;top:343px;line-height:19px;font-size:13.33px;color:#000">2016</div>
<svg style="left:27px;top:343px" width="6" height="6" viewBox="0 0 6 6"><path d="M0 0H6L0 6Z" fill="#1e7a1e"/></svg>
<div class="a" style="left:173px;top:343px;line-height:19px;font-size:13.33px;color:#000">1</div>
<div class="a" style="left:363px;top:343px;width:141px;text-align:right;line-height:19px;font-size:13.33px;color:#000">4669</div>
<div class="a" style="left:507px;top:343px;width:141px;text-align:right;line-height:19px;font-size:13.33px;color:#000">4669</div>
<div class="a" style="left:27px;top:382px;width:624px;height:1px;background:#c0c0c0"></div>
<div class="a" style="left:29px;top:363px;line-height:19px;font-size:13.33px;color:#000">2016</div>
<svg style="left:27px;top:363px" width="6" height="6" viewBox="0 0 6 6"><path d="M0 0H6L0 6Z" fill="#1e7a1e"/></svg>
<div class="a" style="left:173px;top:363px;line-height:19px;font-size:13.33px;color:#000">2</div>
<div class="a" style="left:363px;top:363px;width:141px;text-align:right;line-height:19px;font-size:13.33px;color:#000">2045</div>
<div class="a" style="left:507px;top:363px;width:141px;text-align:right;line-height:19px;font-size:13.33px;color:#000">4090</div>
<div class="a" style="left:27px;top:402px;width:624px;height:1px;background:#c0c0c0"></div>
<div class="a" style="left:29px;top:383px;line-height:19px;font-size:13.33px;color:#000">2016</div>
<svg style="left:27px;top:383px" width="6" height="6" viewBox="0 0 6 6"><path d="M0 0H6L0 6Z" fill="#1e7a1e"/></svg>
<div class="a" style="left:173px;top:383px;line-height:19px;font-size:13.33px;color:#000">3</div>
<div class="a" style="left:363px;top:383px;width:141px;text-align:right;line-height:19px;font-size:13.33px;color:#000">814</div>
<div class="a" style="left:507px;top:383px;width:141px;text-align:right;line-height:19px;font-size:13.33px;color:#000">2442</div>
<div class="a" style="left:27px;top:422px;width:624px;height:1px;background:#c0c0c0"></div>
<div class="a" style="left:29px;top:403px;line-height:19px;font-size:13.33px;color:#000">2016</div>
<svg style="left:27px;top:403px" width="6" height="6" viewBox="0 0 6 6"><path d="M0 0H6L0 6Z" fill="#1e7a1e"/></svg>
<div class="a" style="left:173px;top:403px;line-height:19px;font-size:13.33px;color:#000">4</div>
<div class="a" style="left:363px;top:403px;width:141px;text-align:right;line-height:19px;font-size:13.33px;color:#000">364</div>
<div class="a" style="left:507px;top:403px;width:141px;text-align:right;line-height:19px;font-size:13.33px;color:#000">1456</div>
<div class="a" style="left:170px;top:343px;width:1px;height:80px;background:#c0c0c0"></div>
<div class="a" style="left:362px;top:343px;width:1px;height:80px;background:#c0c0c0"></div>
<div class="a" style="left:506px;top:343px;width:1px;height:80px;background:#c0c0c0"></div>
<div class="a" style="left:650px;top:343px;width:1px;height:80px;background:#c0c0c0"></div>
<div class="a" style="left:27px;top:423px;width:623px;height:19px;background:#c0c0c0"></div>
<div class="a" style="left:30px;top:423px;line-height:20px;font-size:13.33px;font-weight:bold;color:#111">Total</div>
<div class="a" style="left:363px;top:423px;width:141px;text-align:right;line-height:20px;font-size:13.33px;font-weight:bold;color:#111">7892</div>
<div class="a" style="left:507px;top:423px;width:141px;text-align:right;line-height:20px;font-size:13.33px;font-weight:bold;color:#111">12657</div>
<div class="a" style="left:500px;top:461px;width:148px;text-align:right;line-height:15px;font-size:12px;color:#000"><span style="display:inline-block;transform:scaleX(0.75);transform-origin:right">SSSSSSSSSSSSSSSS</span></div>
<div class="a" style="left:500px;top:477px;width:148px;text-align:right;line-height:15px;font-size:12px;color:#000"><span style="display:inline-block;transform:scaleX(0.75);transform-origin:right">LLLLLLLLLLLLLL</span></div>

<!-- SHEET TAB BAR -->
<div class="a" style="left:0;top:693px;width:1261px;height:28px;background:#e6e6e6;border-top:1px solid #c6c6c6"></div>
<div class="a" style="left:101px;top:693px;width:50px;height:25px;background:#fff;border-left:1px solid #c6c6c6;border-right:1px solid #c6c6c6"></div>
<div class="a" style="left:101px;top:716px;width:50px;height:2px;background:#217346"></div>
<div class="a" style="left:113px;top:698px;font-size:13px;font-weight:bold;color:#217346">Test</div>
<div class="a" style="left:0;top:721px;width:1261px;height:1px;background:#d4d4d4"></div>
<div class="a" style="left:0;top:722px;width:1261px;height:22px;background:#f3f2f1"></div>
<div class="a" style="left:949px;top:722px;width:40px;height:20px;background:#c8c6c4"></div>
<div class="a" style="left:1214px;top:725px;font-size:11px;color:#555">100%</div>
<!-- h scrollbar -->
<div class="a" style="left:788px;top:701px;width:435px;height:13px;background:#d9d9d9"></div>
<div class="a" style="left:773px;top:700px;width:15px;height:15px;background:#fff;border:1px solid #c0c0c0"></div>
<div class="a" style="left:787px;top:700px;width:400px;height:15px;background:#fff;border:1px solid #c0c0c0"></div>
<div class="a" style="left:1223px;top:700px;width:15px;height:15px;background:#fff;border:1px solid #c0c0c0"></div>
<!-- v scrollbar -->
<div class="a" style="left:1239px;top:243px;width:21px;height:450px;background:#e6e6e6"></div>
<div class="a" style="left:1243px;top:261px;width:13px;height:418px;background:#d9d9d9"></div>
<div class="a" style="left:1242px;top:246px;width:15px;height:15px;background:#fff;border:1px solid #c0c0c0"></div>
<div class="a" style="left:1242px;top:260px;width:15px;height:394px;background:#fff;border:1px solid #c0c0c0"></div>
<div class="a" style="left:1242px;top:678px;width:15px;height:15px;background:#fff;border:1px solid #c0c0c0"></div>
<svg style="left:0;top:0" width="1261" height="744" viewBox="0 0 1261 744">
<path d="M1246 256H1253L1249.5 252.5Z" fill="#666"/>
<path d="M1246 683H1253L1249.5 686.5Z" fill="#666"/>
<path d="M782 704V711L778.5 707.5Z" fill="#666"/>
<path d="M1229 704V711L1232.5 707.5Z" fill="#666"/>
<path d="M31.5 704.5L28 707.5L31.5 710.5Z" fill="#c0c0c0"/>
<path d="M58 704.5L61.5 707.5L58 710.5Z" fill="#c0c0c0"/>
<circle cx="191.8" cy="706.8" r="7.4" fill="none" stroke="#888" stroke-width="1"/>
<path d="M188.3 706.8H195.3M191.8 703.3V710.3" stroke="#666" stroke-width="1.6"/>
<circle cx="756.7" cy="702.5" r="1" fill="#999"/><circle cx="756.7" cy="706.5" r="1" fill="#999"/><circle cx="756.7" cy="710.5" r="1" fill="#999"/>
<!-- status icon -->
<path d="M9.5 737.5V726.5H22.5V731" fill="none" stroke="#555"/><line x1="9.5" y1="728.5" x2="22.5" y2="728.5" stroke="#555"/>
<path d="M11.5 731H15M11.5 733.5H15M11.5 736H15" stroke="#555" stroke-width="0.8"/>
<circle cx="19.5" cy="734" r="3.5" fill="#f3f2f1" stroke="#555"/><circle cx="19.5" cy="734" r="1.6" fill="#555"/>
<!-- view icons -->
<path d="M962.5 725.5H974.5V737.5H962.5ZM962.5 729.5H974.5M962.5 733.5H974.5M966.5 725.5V737.5M970.5 725.5V737.5" fill="none" stroke="#333"/>
<path d="M1002.5 725.5H1015.5V737.5H1002.5Z" fill="none" stroke="#444"/><path d="M1005.5 728.5H1012.5V734.5H1005.5Z" fill="none" stroke="#444"/><path d="M1007 730.5H1011M1007 732.5H1011" stroke="#444" stroke-width="0.8"/>
<path d="M1042.5 725.5H1055.5V737.5H1042.5ZM1048.5 725.5V731.5H1042.5" fill="none" stroke="#444"/>
<line x1="1075" y1="731.5" x2="1082.5" y2="731.5" stroke="#555"/>
<line x1="1087.5" y1="731.5" x2="1187" y2="731.5" stroke="#a8a8a8"/>
<rect x="1136" y="725.5" width="5" height="11" fill="#777"/>
<path d="M1193 731.5H1201M1197 727.5V735.5" stroke="#555"/>
</svg>
<!-- window border -->
<div class="a" style="left:0;top:34px;width:1px;height:710px;background:#8c8c8c"></div>
<div class="a" style="left:1260px;top:34px;width:1px;height:710px;background:#8c8c8c"></div>
<div class="a" style="left:0;top:0;width:1px;height:34px;background:#6a9f80"></div>
<div class="a" style="left:1260px;top:0;width:1px;height:34px;background:#6a9f80"></div>
<div class="a" style="left:0;top:742px;width:1261px;height:2px;background:#8c8c8c"></div>

</body></html>
